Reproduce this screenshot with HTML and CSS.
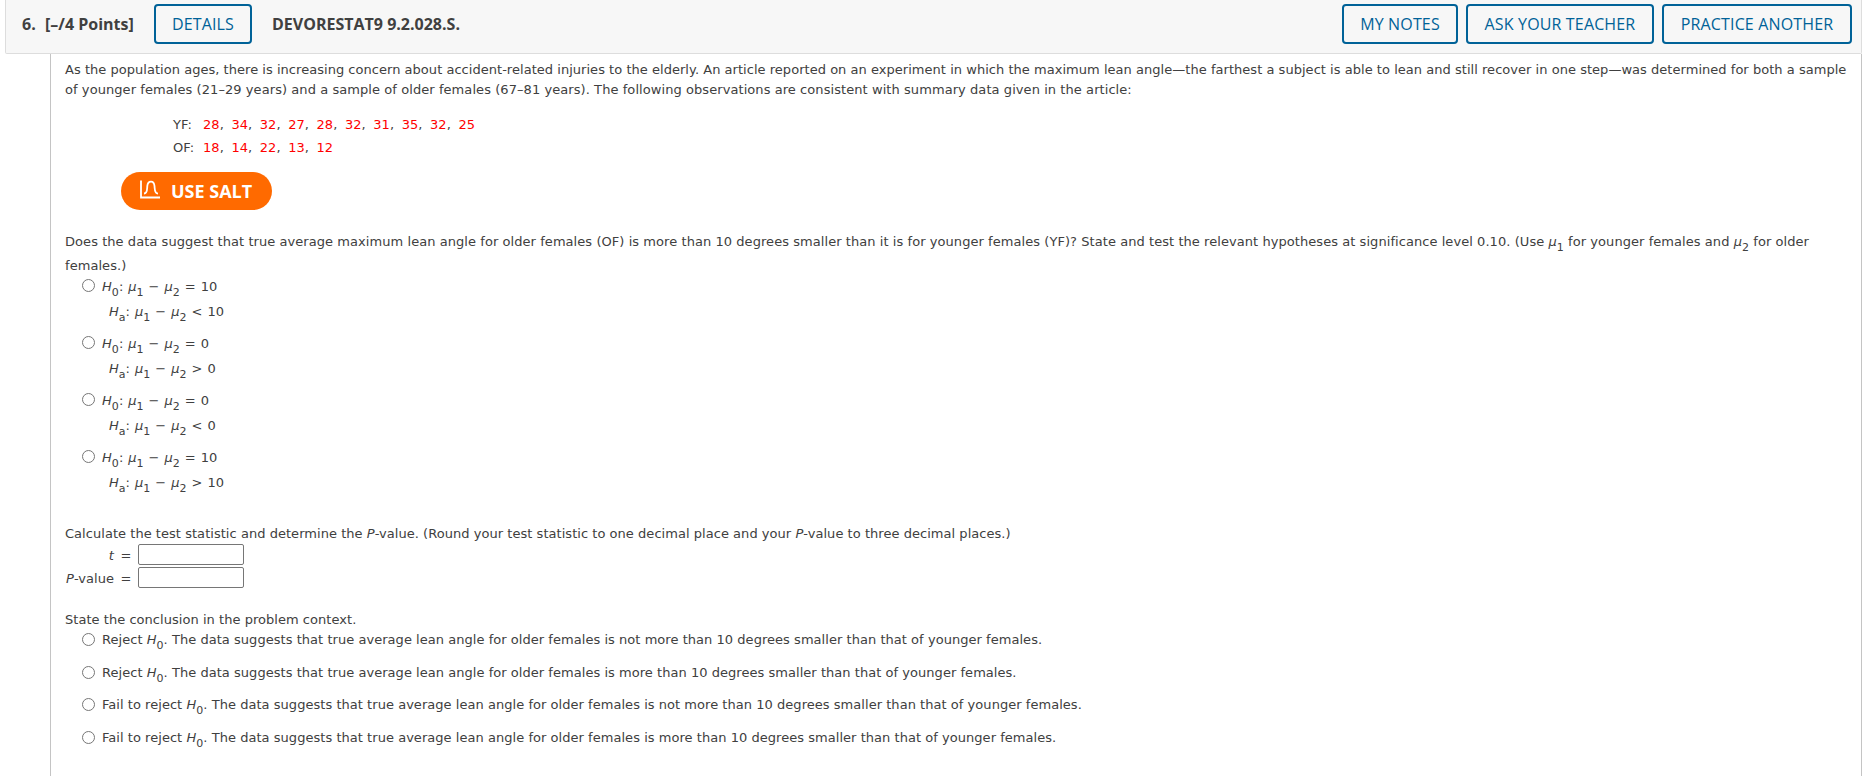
FILE: index.html
```html
<!DOCTYPE html>
<html lang="en">
<head>
    <meta charset="UTF-8">
    <meta name="viewport" content="width=device-width, initial-scale=1.0">
    <title>DEVORESTAT9 9.2.028.S.</title>
    <link rel="stylesheet" href="styles.css">
</head>
<body>
    <div class="question">
        <!-- Question header -->
        <div class="header">
            <span class="number">6.</span>
            <span class="points">[–/4 Points]</span>
            <button class="btn btn-details">DETAILS</button>
            <span class="code">DEVORESTAT9 9.2.028.S.</span>
            <div class="actions">
                <button class="btn btn-notes">MY NOTES</button>
                <button class="btn btn-ask">ASK YOUR TEACHER</button>
                <button class="btn btn-practice">PRACTICE ANOTHER</button>
            </div>
        </div>

        <div class="content">
            <p class="intro">As the population ages, there is increasing concern about accident-related injuries to the elderly. An article reported on an experiment in which the maximum lean angle—the farthest a subject is able to lean and still recover in one step—was determined for both a sample<br><span class="loose">of younger females (21–29 years) and a sample of older females (67–81 years). The following observations are consistent with summary data given in the article:</span></p>

            <div class="data">
                <div class="data-label">YF:</div>
                <div class="data-values"><b>28</b>, <b>34</b>, <b>32</b>, <b>27</b>, <b>28</b>, <b>32</b>, <b>31</b>, <b>35</b>, <b>32</b>, <b>25</b></div>
                <div class="data-label">OF:</div>
                <div class="data-values"><b>18</b>, <b>14</b>, <b>22</b>, <b>13</b>, <b>12</b></div>
            </div>

            <button class="salt">
                <svg width="20" height="19" viewBox="0 0 20 19" fill="none" stroke="#fff" stroke-width="1.8">
                    <path d="M1 0.5V17.5H20"/>
                    <path d="M4 13.5C7.5 13.5 7 9.5 7.3 6C7.6 2.8 9 1.6 11 1.6C13 1.6 14.2 2.8 14.5 6C14.8 9.5 14.5 13.5 18 13.5"/>
                </svg>
                <span>USE SALT</span>
            </button>

            <p class="prompt">Does the data suggest that true average maximum lean angle for older females (OF) is more than 10 degrees smaller than it is for younger females (YF)? State and test the relevant hypotheses at significance level 0.10. (Use <i>μ</i><sub>1</sub> for younger females and <i>μ</i><sub>2</sub> for older<br>females.)</p>

            <!-- Hypotheses -->
            <div class="hypotheses">
                <label class="hypothesis">
                    <input type="radio" name="hyp">
                    <span><i>H</i><sub>0</sub>: <i>μ</i><sub>1</sub> − <i>μ</i><sub>2</sub> = 10</span>
                    <span class="alt"><i>H</i><sub>a</sub>: <i>μ</i><sub>1</sub> − <i>μ</i><sub>2</sub> &lt; 10</span>
                </label>
                <label class="hypothesis">
                    <input type="radio" name="hyp">
                    <span><i>H</i><sub>0</sub>: <i>μ</i><sub>1</sub> − <i>μ</i><sub>2</sub> = 0</span>
                    <span class="alt"><i>H</i><sub>a</sub>: <i>μ</i><sub>1</sub> − <i>μ</i><sub>2</sub> &gt; 0</span>
                </label>
                <label class="hypothesis">
                    <input type="radio" name="hyp">
                    <span><i>H</i><sub>0</sub>: <i>μ</i><sub>1</sub> − <i>μ</i><sub>2</sub> = 0</span>
                    <span class="alt"><i>H</i><sub>a</sub>: <i>μ</i><sub>1</sub> − <i>μ</i><sub>2</sub> &lt; 0</span>
                </label>
                <label class="hypothesis">
                    <input type="radio" name="hyp">
                    <span><i>H</i><sub>0</sub>: <i>μ</i><sub>1</sub> − <i>μ</i><sub>2</sub> = 10</span>
                    <span class="alt"><i>H</i><sub>a</sub>: <i>μ</i><sub>1</sub> − <i>μ</i><sub>2</sub> &gt; 10</span>
                </label>
            </div>

            <!-- Test statistic -->
            <p class="calc">Calculate the test statistic and determine the <i>P</i>-value. (Round your test statistic to one decimal place and your <i>P</i>-value to three decimal places.)</p>
            <div class="answers">
                <label for="t"><i>t</i></label><span>=</span>
                <input type="text" id="t">
                <label for="p"><i>P</i>-value</label><span>=</span>
                <input type="text" id="p">
            </div>

            <!-- Conclusion -->
            <p class="state">State the conclusion in the problem context.</p>
            <div class="conclusions">
                <label class="conclusion">
                    <input type="radio" name="con">
                    <span>Reject <i>H</i><sub>0</sub>. The data suggests that true average lean angle for older females is not more than 10 degrees smaller than that of younger females.</span>
                </label>
                <label class="conclusion">
                    <input type="radio" name="con">
                    <span>Reject <i>H</i><sub>0</sub>. The data suggests that true average lean angle for older females is more than 10 degrees smaller than that of younger females.</span>
                </label>
                <label class="conclusion">
                    <input type="radio" name="con">
                    <span>Fail to reject <i>H</i><sub>0</sub>. The data suggests that true average lean angle for older females is not more than 10 degrees smaller than that of younger females.</span>
                </label>
                <label class="conclusion">
                    <input type="radio" name="con">
                    <span>Fail to reject <i>H</i><sub>0</sub>. The data suggests that true average lean angle for older females is more than 10 degrees smaller than that of younger females.</span>
                </label>
            </div>
        </div>
    </div>
</body>
</html>
```

FILE: styles.css
```css
* {
    box-sizing: border-box;
}

body {
    margin: 0;
    height: 776px;
    overflow: hidden;
    background-color: #fff;
    color: #404040;
    font-family: Verdana, "DejaVu Sans", sans-serif;
    font-size: 13px;
    letter-spacing: 0.04px;
}

p {
    margin: 0;
    white-space: nowrap;
}

sub {
    font-size: 11px;
    line-height: 0;
    vertical-align: -5px;
}

.question {
    width: 1857px;
    height: 776px;
    margin-left: 5px;
}

/* Header */
.header {
    display: flex;
    align-items: flex-start;
    height: 54px;
    padding: 4px 9px 0 16px;
    border: 1px solid #ddd;
    border-top: none;
    border-radius: 0 0 2px 2px;
    background-color: #f7f7f7;
    font-family: "Open Sans", sans-serif;
    font-size: 16px;
    font-weight: 700;
    letter-spacing: 0;
    line-height: 40px;
    white-space: nowrap;
}

.number {
    width: 23px;
}

.points {
    width: 109px;
}

.code {
    margin-left: 20px;
}

.btn {
    height: 40px;
    padding: 0;
    border: 2px solid #006298;
    border-radius: 4px;
    background: none;
    color: #006298;
    font-family: inherit;
    font-size: 16px;
    font-weight: 500;
    letter-spacing: 0.15px;
    line-height: 36px;
    text-align: center;
    white-space: nowrap;
}

.btn-details {
    width: 98px;
}

.actions {
    display: flex;
    gap: 8px;
    margin-left: auto;
}

.btn-notes {
    width: 116px;
}

.btn-ask {
    width: 188px;
}

.btn-practice {
    width: 190px;
}

/* Question body */
.content {
    height: 722px;
    margin-left: 45px;
    padding: 6px 0 0 14px;
    border-left: 1px solid #c4c4c4;
    border-right: 1px solid #c4c4c4;
}

.intro {
    letter-spacing: 0.033px;
    line-height: 20px;
}

.loose {
    letter-spacing: 0.07px;
}

.data {
    display: grid;
    grid-template-columns: 30px auto;
    grid-auto-rows: 23px;
    margin: 13px 0 0 108px;
    line-height: 23px;
}

.data-values {
    word-spacing: 3.4px;
}

.data-values b {
    color: #f00;
    font-weight: 400;
}

.salt {
    display: flex;
    align-items: center;
    width: 151px;
    height: 38px;
    margin: 13px 0 0 56px;
    padding: 0 0 0 19px;
    border: none;
    border-radius: 19px;
    background-color: #ff6a00;
    color: #fff;
    font-family: "Open Sans", sans-serif;
    font-size: 18px;
    font-weight: 700;
}

.salt svg {
    margin-top: -3px;
}

.salt span {
    margin-left: 11px;
}

.prompt {
    margin-top: 20px;
    letter-spacing: 0.06px;
    line-height: 24px;
}

/* Radio options */
input[type="radio"] {
    width: 13px;
    height: 13px;
    margin: 0;
}

.hypotheses {
    height: 228px;
}

.hypothesis {
    display: grid;
    grid-template-columns: 20px auto;
    grid-template-rows: 25px 32px;
    height: 57px;
    padding-left: 17px;
    line-height: 17px;
    word-spacing: 0.8px;
    white-space: nowrap;
}

.hypothesis input {
    margin-top: 1px;
}

.alt {
    grid-column: 2;
    padding-left: 7px;
}

.calc {
    margin-top: 18px;
    line-height: 20px;
}

.answers {
    display: grid;
    grid-template-columns: 49px 24px 106px;
    grid-auto-rows: 21px;
    row-gap: 2px;
    line-height: 23px;
    white-space: nowrap;
}

.answers label {
    text-align: right;
}

.answers span {
    text-align: center;
}

.answers input {
    width: 106px;
    height: 21px;
    border: 1px solid #767676;
    border-radius: 2px;
}

.state {
    margin-top: 22px;
    line-height: 20px;
}

.conclusion {
    display: flex;
    height: 32.67px;
    padding-left: 17px;
    line-height: 20px;
    white-space: nowrap;
}

.conclusion input {
    margin: 3px 7px 0 0;
}
```
